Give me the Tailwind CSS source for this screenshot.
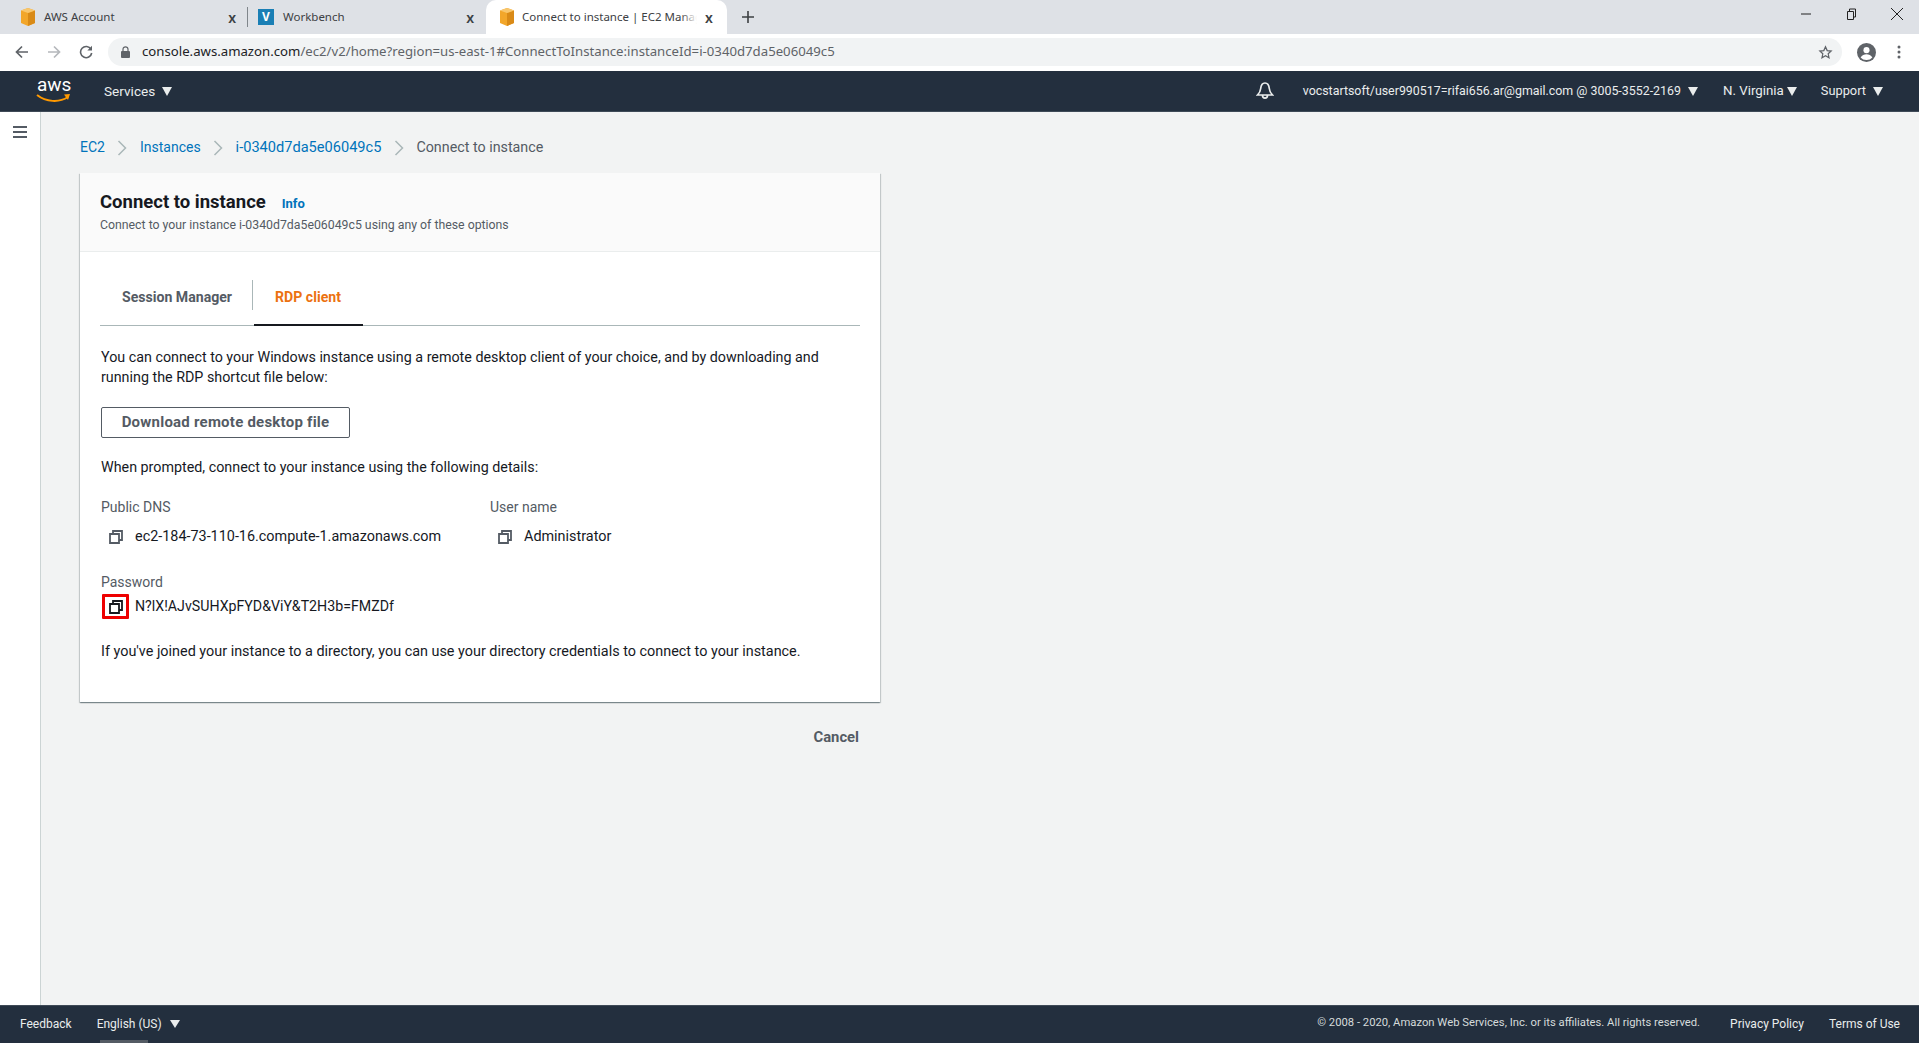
<!DOCTYPE html>
<html lang="en">
<head>
  <meta charset="UTF-8" />
  <title>Connect to instance | EC2 Management Console</title>
  <script src="https://cdn.jsdelivr.net/npm/@tailwindcss/browser@4"></script>
</head>
<body class="h-screen overflow-hidden flex flex-col font-[Roboto,sans-serif] text-[14.3px] text-[#16191f] bg-white">

  <!-- Chrome tabs -->
  <div class="h-[34px] shrink-0 bg-[#dee1e6] flex items-end font-['Noto_Sans',sans-serif] text-[11.5px] text-[#3c4043]">
    <div class="w-[247px] h-[34px] flex items-center pl-[20px] pr-[11px]">
      <svg class="w-[16px] h-[20px] shrink-0" viewBox="0 0 16 20"><path d="M8 1 15 3.5V16L8 19 1 16V3.5Z" fill="#f2a62a"/><path d="M8 6 15 3.5V16L8 19Z" fill="#d98a17"/><path d="M8 1 15 3.5 8 6 1 3.5Z" fill="#f8c66d"/></svg>
      <span class="ml-[8px] flex-1">AWS Account</span>
      <span class="text-[14px] font-semibold text-[#3c4043]">x</span>
    </div>
    <div class="w-[1px] h-[20px] bg-[#80868b] mb-[7px]"></div>
    <div class="w-[238px] h-[34px] flex items-center pl-[10px] pr-[12px]">
      <div class="w-[16px] h-[16px] shrink-0 bg-[#1a7fb5] text-white flex items-center justify-center text-[12px] font-bold">V</div>
      <span class="ml-[9px] flex-1">Workbench</span>
      <span class="text-[14px] font-semibold text-[#3c4043]">x</span>
    </div>
    <div class="w-[241px] h-[34px] bg-white rounded-t-[10px] flex items-center pl-[13px] pr-[12px]">
      <svg class="w-[16px] h-[20px] shrink-0" viewBox="0 0 16 20"><path d="M8 1 15 3.5V16L8 19 1 16V3.5Z" fill="#f2a62a"/><path d="M8 6 15 3.5V16L8 19Z" fill="#d98a17"/><path d="M8 1 15 3.5 8 6 1 3.5Z" fill="#f8c66d"/></svg>
      <span class="relative ml-[7px] w-[175px] whitespace-nowrap overflow-hidden">Connect to instance | EC2 Manag
        <span class="absolute right-0 top-0 bottom-0 w-[16px] bg-gradient-to-r from-white/0 to-white"></span>
      </span>
      <span class="ml-[8px] text-[14px] font-semibold text-[#3c4043]">x</span>
    </div>
    <div class="w-[42px] h-[34px] flex items-center justify-center">
      <svg class="w-[14px] h-[14px]" viewBox="0 0 14 14"><path d="M7 1v12M1 7h12" stroke="#3c4043" stroke-width="1.6"/></svg>
    </div>
    <div class="flex-1"></div>
    <div class="h-[28px] self-start flex items-center pr-[15px] gap-[33px]">
      <svg class="w-[12px] h-[12px]" viewBox="0 0 12 12"><path d="M1 6h10" stroke="#222" stroke-width="1"/></svg>
      <svg class="w-[12px] h-[12px]" viewBox="0 0 12 12"><path d="M2.500 3.500h6v8h-6zM4.500 3.500V1h6v8h-2" fill="none" stroke="#222" stroke-width="1"/></svg>
      <svg class="w-[14px] h-[14px]" viewBox="0 0 14 14"><path d="M1 1l12 12M13 1 1 13" stroke="#222" stroke-width="1"/></svg>
    </div>
  </div>

  <!-- Chrome toolbar -->
  <div class="h-[37px] shrink-0 bg-white flex items-center pb-[1px]">
    <div class="w-[108px] flex items-center pl-[15px] gap-[18px]">
      <svg class="w-[14px] h-[14px]" viewBox="0 0 14 14"><path d="M13 7H2M7 1.500 1.500 7 7 12.500" fill="none" stroke="#5f6368" stroke-width="1.700"/></svg>
      <svg class="w-[14px] h-[14px]" viewBox="0 0 14 14"><path d="M1 7h11M7 1.500 12.500 7 7 12.500" fill="none" stroke="#b5b8bc" stroke-width="1.700"/></svg>
      <svg class="w-[14px] h-[14px]" viewBox="0 0 14 14"><path d="M12 4.200A5.600 5.600 0 1 0 12.700 8" fill="none" stroke="#5f6368" stroke-width="1.600"/><path d="M13 .8V5.500H8.300Z" fill="#5f6368"/></svg>
    </div>
    <div class="w-[1734px] h-[28px] bg-[#f1f3f4] rounded-full flex items-center pl-[13px] pr-[9px] font-['Noto_Sans',sans-serif] text-[13.2px] text-[#202124]">
      <svg class="w-[9px] h-[12px] shrink-0" viewBox="0 0 9 12"><path d="M2 5V3.300a2.500 2.500 0 0 1 5 0V5" fill="none" stroke="#5f6368" stroke-width="1.200"/><rect y="5" width="9" height="7" rx="1" fill="#5f6368"/></svg>
      <span class="ml-[12px] flex-1 whitespace-nowrap">console.aws.amazon.com<span class="text-[#5f6368]">/ec2/v2/home?region=us-east-1#ConnectToInstance:instanceId=i-0340d7da5e06049c5</span></span>
      <svg class="w-[15px] h-[15px]" viewBox="0 0 24 24"><path d="M12 3l2.700 6 6.300.7-4.700 4.300 1.300 6.400L12 17.200l-5.600 3.200 1.300-6.400L3 9.700 9.300 9Z" fill="none" stroke="#5f6368" stroke-width="2"/></svg>
    </div>
    <div class="flex-1 flex items-center pl-[15px] gap-[21px]">
      <svg class="w-[19px] h-[19px]" viewBox="0 0 20 20"><circle cx="10" cy="10" r="10" fill="#5f6368"/><circle cx="10" cy="7.500" r="3.200" fill="#fff"/><path d="M3.800 15.300c1.500-2.600 3.800-3.400 6.200-3.400s4.700.8 6.200 3.400A8 8 0 0 1 10 18a8 8 0 0 1-6.200-2.700Z" fill="#fff"/></svg>
      <svg class="w-[4px] h-[14px]" viewBox="0 0 4 14"><circle cx="2" cy="2" r="1.500" fill="#5f6368"/><circle cx="2" cy="7" r="1.500" fill="#5f6368"/><circle cx="2" cy="12" r="1.500" fill="#5f6368"/></svg>
    </div>
  </div>

  <!-- AWS nav -->
  <div class="h-[41px] shrink-0 bg-[#232f3e] border-b border-[#3f4a57] flex items-center text-[#eaeded] text-[13.6px]">
    <div class="w-[104px] pl-[37px] relative h-full">
      <span class="absolute left-[37px] top-[2px] text-white text-[19px] leading-[24px]">aws</span>
      <svg class="absolute left-[36px] top-[22px] w-[35px] h-[11px]" viewBox="0 0 35 11"><path d="M1 2c9 7 22 8 31 2" fill="none" stroke="#f90" stroke-width="2"/><path d="M28 1.500l6-.5-2 6Z" fill="#f90"/></svg>
    </div>
    <span>Services</span>
    <span class="ml-[7px] w-0 h-0 border-x-[5px] border-x-transparent border-t-[9px] border-t-[#eaeded]"></span>
    <div class="flex-1"></div>
    <svg class="w-[18px] h-[20px] mr-[29px]" viewBox="0 0 18 20"><path d="M9 2c3 0 4 2.500 4.300 5.500.3 3 1.700 5 3.200 6.500H1.500c1.500-1.500 2.900-3.500 3.200-6.500C5 4.500 6 2 9 2ZM6.500 14.500c0 3.500 5 3.500 5 0" fill="none" stroke="#eaeded" stroke-width="1.700"/></svg>
    <span class="text-[12.4px] whitespace-nowrap">vocstartsoft/user990517=rifai656.ar@gmail.com @ 3005-3552-2169</span>
    <span class="ml-[7px] w-0 h-0 border-x-[5px] border-x-transparent border-t-[9px] border-t-[#eaeded]"></span>
    <span class="ml-[25px] text-[13.3px]">N. Virginia</span>
    <span class="ml-[3px] w-0 h-0 border-x-[5px] border-x-transparent border-t-[9px] border-t-[#eaeded]"></span>
    <span class="ml-[24px] text-[12.8px]">Support</span>
    <span class="ml-[7px] mr-[36px] w-0 h-0 border-x-[5px] border-x-transparent border-t-[9px] border-t-[#eaeded]"></span>
  </div>

  <!-- Main -->
  <div class="flex-1 flex min-h-0">
    <div class="w-[41px] shrink-0 bg-white border-r border-[#aab7b8]/60 pt-[14px] pl-[13px]">
      <div class="w-[14px] flex flex-col gap-[3px]">
        <div class="h-[2px] bg-[#545b64]"></div>
        <div class="h-[2px] bg-[#545b64]"></div>
        <div class="h-[2px] bg-[#545b64]"></div>
      </div>
    </div>
    <div class="flex-1 bg-[#f2f3f3] pl-[39px]">
      <!-- Breadcrumb -->
      <div class="h-[61px] flex items-center pt-[10px] text-[14px] text-[#0073bb]">
        <span>EC2</span>
        <svg class="w-[10px] h-[16px] mx-[12.500px]" viewBox="0 0 10 16"><path d="M1.500 1 8.500 8 1.500 15" fill="none" stroke="#aab7b8" stroke-width="1.500"/></svg>
        <span>Instances</span>
        <svg class="w-[10px] h-[16px] mx-[12.500px]" viewBox="0 0 10 16"><path d="M1.500 1 8.500 8 1.500 15" fill="none" stroke="#aab7b8" stroke-width="1.500"/></svg>
        <span class="text-[14.600px]">i-0340d7da5e06049c5</span>
        <svg class="w-[10px] h-[16px] mx-[12.500px]" viewBox="0 0 10 16"><path d="M1.500 1 8.500 8 1.500 15" fill="none" stroke="#aab7b8" stroke-width="1.500"/></svg>
        <span class="text-[14.300px] text-[#545b64]">Connect to instance</span>
      </div>

      <!-- Card -->
      <div class="w-[800px] h-[529px] bg-white shadow-[0_1px_1px_0_rgba(0,28,36,0.3),1px_1px_1px_0_rgba(0,28,36,0.15),-1px_1px_1px_0_rgba(0,28,36,0.15)]">
        <div class="h-[79px] bg-[#fafafa] border-b border-[#eaeded] px-[20px] pt-[18px]">
          <div class="flex items-baseline">
            <span class="text-[18.500px] leading-[22px] font-bold">Connect to instance</span>
            <span class="ml-[16px] text-[13px] font-bold text-[#0073bb]">Info</span>
          </div>
          <div class="mt-[2px] text-[12.300px] leading-[18px] text-[#545b64]">Connect to your instance i-0340d7da5e06049c5 using any of these options</div>
        </div>
        <div class="px-[20px]">
          <!-- Tabs -->
          <div class="h-[74px] flex items-end border-b border-[#aab7b8] font-bold text-[14.100px]">
            <div class="w-[153px] h-[44px] flex items-start pl-[22px] pt-[6px] text-[#545b64]">
              <span class="leading-[20px]">Session Manager</span>
            </div>
            <div class="w-[110px] h-[45px] relative flex items-start justify-center pt-[7px] text-[#ec7211]">
              <span class="leading-[20px]">RDP client</span>
              <div class="absolute -left-[1px] top-0 h-[30px] w-[1px] bg-[#aab7b8]"></div>
              <div class="absolute left-[1px] right-0 -bottom-[1px] h-[2px] bg-[#16191f]"></div>
            </div>
          </div>

          <p class="mt-[21px] leading-[20px] w-[740px] pl-[1px]">You can connect to your Windows instance using a remote desktop client of your choice, and by downloading and running the RDP shortcut file below:</p>
          <button class="mt-[20px] ml-[1px] w-[249px] h-[31px] border border-[#545b64] rounded-[2px] font-bold text-[15px] tracking-[0.23px] text-[#545b64] bg-white">Download remote desktop file</button>
          <p class="mt-[19px] leading-[20px] pl-[1px]">When prompted, connect to your instance using the following details:</p>

          <div class="mt-[20px] pl-[1px] grid grid-cols-[389px_1fr]">
            <div>
              <div class="leading-[20px] text-[14px] text-[#545b64]">Public DNS</div>
              <div class="mt-[10px] flex items-center h-[20px]">
                <svg class="ml-[8px] w-[14px] h-[14px]" viewBox="0 0 14 14"><path d="M1 4h9v9H1zM4 4V1h9v9h-3" fill="none" stroke="#545b64" stroke-width="1.800"/></svg>
                <span class="ml-[12px] text-[14.400px]">ec2-184-73-110-16.compute-1.amazonaws.com</span>
              </div>
            </div>
            <div>
              <div class="leading-[20px] text-[14px] text-[#545b64]">User name</div>
              <div class="mt-[10px] flex items-center h-[20px]">
                <svg class="ml-[8px] w-[14px] h-[14px]" viewBox="0 0 14 14"><path d="M1 4h9v9H1zM4 4V1h9v9h-3" fill="none" stroke="#545b64" stroke-width="1.800"/></svg>
                <span class="ml-[12px] text-[14.400px]">Administrator</span>
              </div>
            </div>
          </div>

          <div class="mt-[25px] pl-[1px] leading-[20px] text-[14px] text-[#545b64]">Password</div>
          <div class="mt-[2px] pl-[2px] flex items-center h-[25px]">
            <div class="w-[27px] h-[25px] border-[3px] border-[#ee0000] rounded-[1px] flex items-center justify-center">
              <svg class="w-[14px] h-[14px]" viewBox="0 0 14 14"><path d="M1 4h9v9H1zM4 4V1h9v9h-3" fill="none" stroke="#16191f" stroke-width="1.800"/></svg>
            </div>
            <span class="ml-[6px] text-[14.200px]">N?lX!AJvSUHXpFYD&amp;ViY&amp;T2H3b=FMZDf</span>
          </div>
          <p class="mt-[23px] pl-[1px] leading-[20px] text-[14.400px]">If you've joined your instance to a directory, you can use your directory credentials to connect to your instance.</p>
        </div>
      </div>

      <div class="w-[800px] mt-[25px] pr-[21px] text-right font-bold text-[14.800px] text-[#545b64] leading-[20px]">Cancel</div>
    </div>
  </div>

  <!-- Footer -->
  <div class="h-[38px] shrink-0 bg-[#232f3e] border-t border-[#3f4a57] relative flex items-center pb-[2px] text-[#eaeded] text-[12px]">
    <span class="ml-[20px]">Feedback</span>
    <span class="ml-[25px]">English (US)</span>
    <span class="ml-[8px] w-0 h-0 border-x-[5px] border-x-transparent border-t-[8px] border-t-[#eaeded]"></span>
    <div class="flex-1"></div>
    <span class="text-[11.250px] text-[#d5dbdb]">© 2008 - 2020, Amazon Web Services, Inc. or its affiliates. All rights reserved.</span>
    <span class="ml-[30px]">Privacy Policy</span>
    <span class="ml-[25px] mr-[19px]">Terms of Use</span>
    <div class="absolute left-[100px] bottom-0 w-[48px] h-[3px] bg-[#545b64]"></div>
  </div>

</body>
</html>
